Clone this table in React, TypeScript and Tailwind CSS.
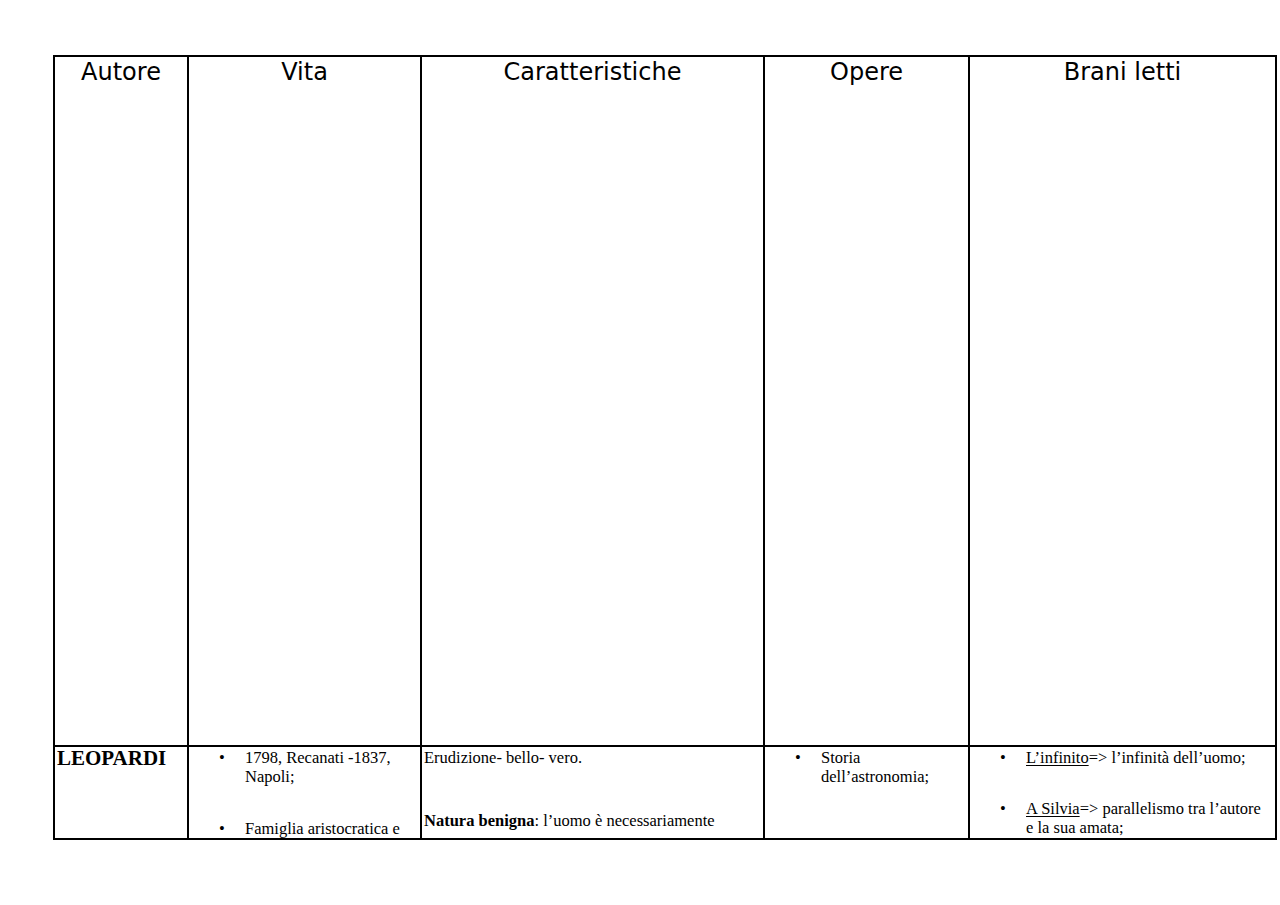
const headers = ['Autore', 'Vita', 'Caratteristiche', 'Opere', 'Brani letti'];
const widths = ['w-[134px]', 'w-[233px]', 'w-[343px]', 'w-[205px]', 'w-[307px]'];

function Bullet({ children, className = '' }: { children: React.ReactNode; className?: string }) {
  return (
    <div className={`flex ${className}`}>
      <span className="w-[56px] shrink-0 pl-[30px]">•</span>
      <span className="min-w-0 flex-1 pr-[2px]">{children}</span>
    </div>
  );
}

export default function App() {
  return (
    <div className="min-h-[905px] w-full bg-white pl-[53px] pt-[55px] text-black">
      <table className="w-[1224px] table-fixed border-collapse">
        <colgroup>
          {widths.map((w) => (
            <col key={w} className={w} />
          ))}
        </colgroup>
        <thead>
          <tr className="h-[690px]">
            {headers.map((h) => (
              <th
                key={h}
                className="border-2 border-black p-0 pt-[1px] align-top text-[24px] font-normal leading-[28px] font-['DejaVu_Sans',sans-serif]"
              >
                {h}
              </th>
            ))}
          </tr>
        </thead>
        <tbody className="font-['Liberation_Serif',serif] text-[16.5px] leading-[19px]">
          <tr className="h-[93px]">
            <td className="border-2 border-black p-0 align-top">
              <div className="h-[91px] overflow-hidden pl-[2px] text-[21px] font-bold leading-[23px]">
                LEOPARDI
              </div>
            </td>
            <td className="border-2 border-black p-0 align-top">
              <div className="h-[91px] overflow-hidden pt-[1px]">
                <Bullet>1798, Recanati -1837, Napoli;</Bullet>
                <Bullet className="mt-[33px]">Famiglia aristocratica e</Bullet>
              </div>
            </td>
            <td className="border-2 border-black p-0 align-top">
              <div className="h-[91px] overflow-hidden pl-[2px] pt-[1px]">
                <p>Erudizione- bello- vero.</p>
                <p className="mt-[44px]">
                  <b>Natura benigna</b>: l’uomo è necessariamente
                </p>
              </div>
            </td>
            <td className="border-2 border-black p-0 align-top">
              <div className="h-[91px] overflow-hidden pt-[1px]">
                <Bullet>Storia dell’astronomia;</Bullet>
              </div>
            </td>
            <td className="border-2 border-black p-0 align-top">
              <div className="h-[91px] overflow-hidden pt-[1px]">
                <Bullet>
                  <span className="underline underline-offset-2">L’infinito</span>=&gt; l’infinità dell’uomo;
                </Bullet>
                <Bullet className="mt-[32px]">
                  <span className="underline underline-offset-2">A Silvia</span>=&gt; parallelismo tra l’autore
                  <br />e la sua amata;
                </Bullet>
              </div>
            </td>
          </tr>
        </tbody>
      </table>
    </div>
  );
}
